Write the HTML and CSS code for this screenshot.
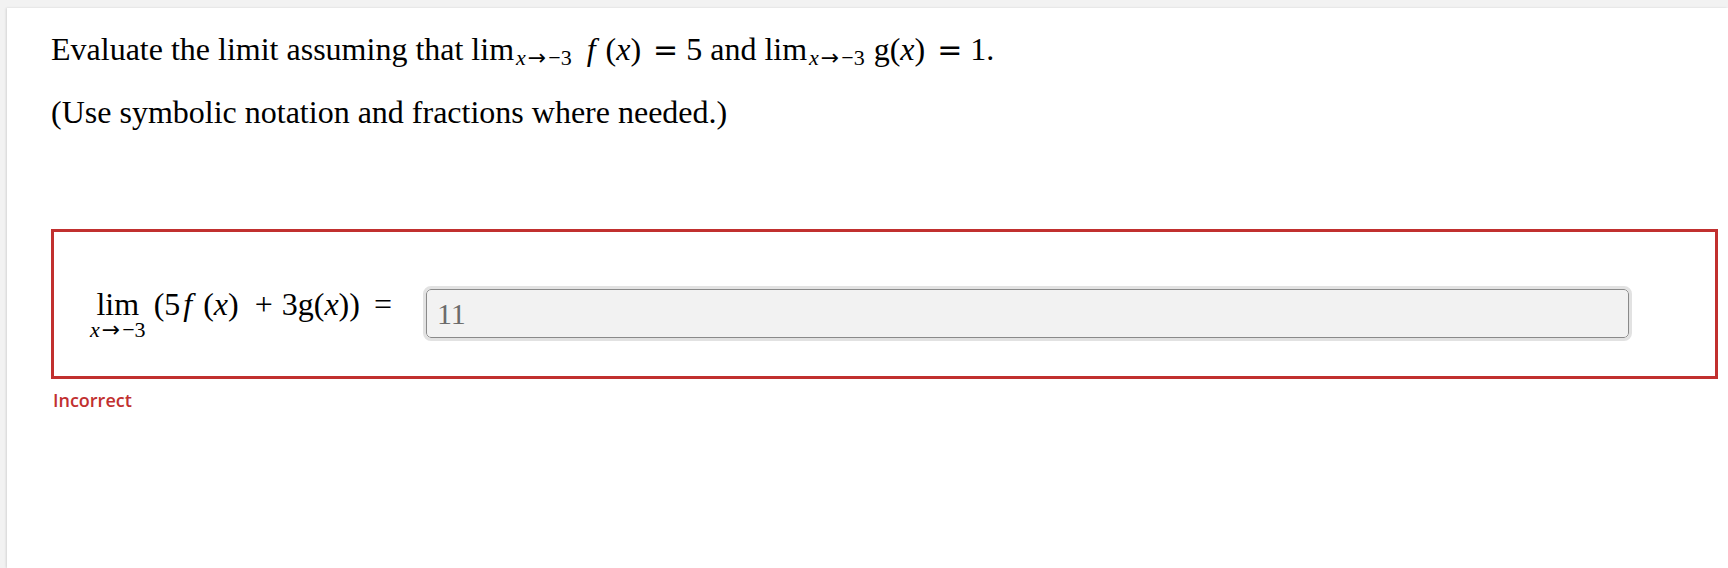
FILE: index.html
```html
<!DOCTYPE html>
<html lang="en">
<head>
    <meta charset="UTF-8">
    <title>Limit question</title>
    <link rel="stylesheet" href="styles.css">
</head>
<body>
    <div class="panel">
        <p class="question">Evaluate the limit assuming that lim<span class="sub"><i>x</i><span class="arrow">→</span>−3</span><span class="math"><i class="fn">f</i><span class="paren">(<i>x</i>)</span><span class="op">=</span>5</span> and lim<span class="sub"><i>x</i><span class="arrow">→</span>−3</span><span class="math">g(<i>x</i>)<span class="op">=</span>1.</span></p>
        <p class="question">(Use symbolic notation and fractions where needed.)</p>

        <div class="answer-box">
            <div class="expr">
                <span class="lim">
                    <span class="lim-word">lim</span>
                    <span class="lim-under"><i>x</i><span class="arrow">→</span>−3</span>
                </span>
                <span class="expr-text">(5<i class="fn">f</i><span class="paren">(<i>x</i>)</span><span class="plus">+</span>3g(<i>x</i>))<span class="eq">=</span></span>
            </div>
            <input class="answer-input" type="text" value="11" disabled>
        </div>

        <div class="feedback">Incorrect</div>
    </div>
</body>
</html>
```

FILE: styles.css
```css
html, body {
    margin: 0;
    padding: 0;
    height: 100%;
}
body {
    background: #f2f2f2;
    font-family: "Liberation Serif", "Times New Roman", serif;
    color: #000;
}
.panel {
    margin: 8px 0 0 7px;
    min-height: calc(100% - 8px);
    background: #fff;
    box-shadow: -1px 0 2px rgba(0, 0, 0, 0.12);
    padding: 21px 10px 0 44px;
    box-sizing: border-box;
}
.question {
    margin: 0 0 23px;
    font-size: 32px;
    line-height: 40px;
    white-space: nowrap;
}
.sub {
    font-size: 22px;
    line-height: 1;
    vertical-align: -5px;
    margin: 0 9px 0 2px;
}
.arrow {
    font-family: "DejaVu Sans", sans-serif;
    margin: 0 2px;
}
.math .op {
    font-family: "DejaVu Sans", sans-serif;
    font-size: 30px;
    line-height: 1;
    margin: 0 8px 0 12px;
}
.fn {
    margin-left: 6px;
}
.paren {
    margin-left: 10px;
}
.answer-box {
    margin-top: 97px;
    border: 3px solid #c1302f;
    padding: 57px 86px 36px 36px;
    display: flex;
    align-items: flex-start;
}
.expr {
    display: flex;
    align-items: baseline;
}
.lim {
    display: inline-flex;
    flex-direction: column;
    align-items: center;
}
.lim-word {
    font-size: 32px;
    line-height: 30px;
}
.lim-under {
    font-size: 22px;
    line-height: 21px;
}
.expr-text {
    font-size: 32px;
    line-height: 30px;
    margin-left: 8px;
    white-space: nowrap;
}
.expr-text .fn {
    margin-left: 3px;
}
.expr-text .paren {
    margin-left: 11px;
}
.plus {
    margin: 0 9px 0 16px;
}
.eq {
    margin-left: 14px;
}
.answer-input {
    flex: 1;
    margin-left: 34px;
    height: 49px;
    box-sizing: border-box;
    border: 1px solid #8a8a8a;
    border-radius: 5px;
    outline: 3px solid #e2e2e2;
    outline-offset: 0;
    background: #f2f2f2;
    font-family: "Liberation Serif", "Times New Roman", serif;
    font-size: 30px;
    color: #6b6b6b;
    padding: 0 0 0 10px;
}
.feedback {
    margin: 9px 0 0 2px;
    font-family: "Open Sans", sans-serif;
    font-weight: 600;
    font-size: 18px;
    line-height: 24px;
    color: #c1302f;
}
```
